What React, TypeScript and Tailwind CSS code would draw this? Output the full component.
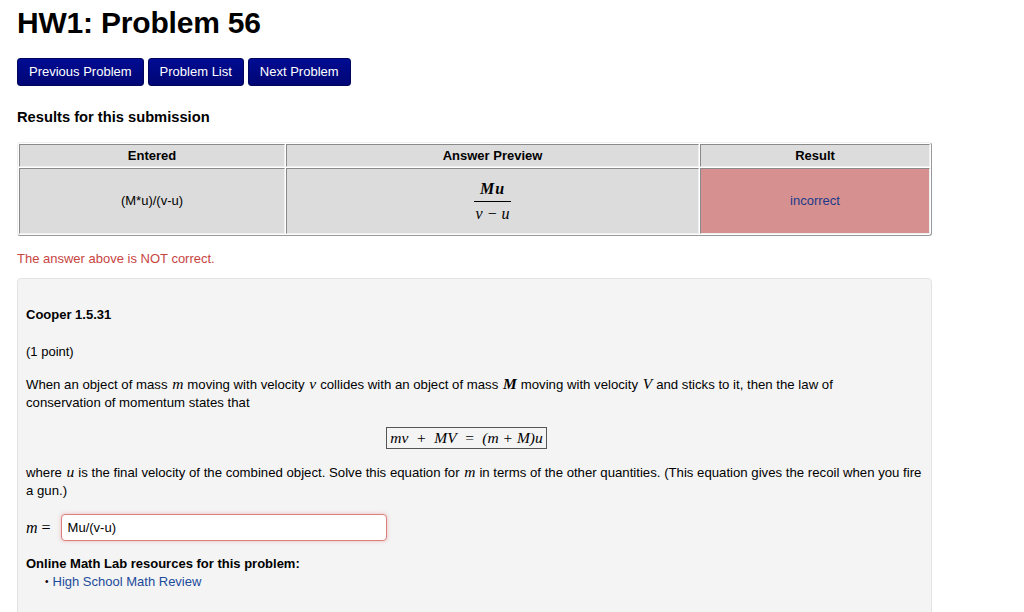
const sans = "font-['Liberation_Sans',Arial,Helvetica,sans-serif]";
const serif = "font-['Liberation_Serif','Times_New_Roman',serif] italic";

function Var({ children }: { children: React.ReactNode }) {
  return <span className={`${serif} ml-[1px] mr-[4px] text-[15.5px]`}>{children}</span>;
}

const navButtons = ["Previous Problem", "Problem List", "Next Problem"];

export default function App() {
  return (
    <div className={`${sans} bg-white text-black min-h-[612px] w-[1024px] overflow-hidden px-[17px] text-[13px]`}>
      {/* Title */}
      <h1 className="pt-[5px] text-[30px] font-bold leading-[36px] tracking-[-0.2px]">HW1: Problem 56</h1>

      {/* Nav buttons */}
      <div className="mt-[17px] flex gap-[4px]">
        {navButtons.map((b) => (
          <button
            key={b}
            className="h-[28px] rounded-[3px] border border-[#00065e] bg-gradient-to-b from-[#000c92] to-[#000674] px-[11px] text-[13px] text-white"
          >
            {b}
          </button>
        ))}
      </div>

      {/* Results */}
      <h2 className="mt-[22px] text-[14.7px] font-bold leading-[18px]">Results for this submission</h2>

      <table className="mt-[16px] w-[915px] border-separate border-spacing-[1px] rounded-[3px] border border-t-[#eeeeee] border-l-[#eeeeee] border-b-[#999999] border-r-[#999999] text-[13px]">
        <thead>
          <tr>
            <th className="h-[23px] w-[266px] border border-t-[#8a8a8a] border-l-[#8a8a8a] border-b-[#f0f0f0] border-r-[#f0f0f0] bg-[#dcdcdc] font-bold">Entered</th>
            <th className="h-[23px] w-[413px] border border-t-[#8a8a8a] border-l-[#8a8a8a] border-b-[#f0f0f0] border-r-[#f0f0f0] bg-[#dcdcdc] font-bold">Answer Preview</th>
            <th className="h-[23px] border border-t-[#8a8a8a] border-l-[#8a8a8a] border-b-[#f0f0f0] border-r-[#f0f0f0] bg-[#dcdcdc] font-bold">Result</th>
          </tr>
        </thead>
        <tbody>
          <tr>
            <td className="h-[66px] border border-t-[#8a8a8a] border-l-[#8a8a8a] border-b-[#f0f0f0] border-r-[#f0f0f0] bg-[#dcdcdc] text-center">(M*u)/(v-u)</td>
            <td className="h-[66px] border border-t-[#8a8a8a] border-l-[#8a8a8a] border-b-[#f0f0f0] border-r-[#f0f0f0] bg-[#dcdcdc] text-center">
              <div className={`${serif} mx-auto inline-flex flex-col items-center text-[16px] leading-[18px]`}>
                <span className="px-[2px] pb-[3px] font-bold tracking-[1px]">Mu</span>
                <span className="w-full border-t border-black px-[2px] pt-[3px]">v − u</span>
              </div>
            </td>
            <td className="h-[66px] border border-t-[#8a8a8a] border-l-[#8a8a8a] border-b-[#f0f0f0] border-r-[#f0f0f0] bg-[#d69090] text-center text-[#1c3a8a]">incorrect</td>
          </tr>
        </tbody>
      </table>

      <p className="mt-[14px] leading-[18px] text-[#c8453f]">The answer above is NOT correct.</p>

      {/* Problem panel */}
      <div className="mt-[10px] w-[915px] rounded-[4px] border border-[#e3e3e3] bg-[#f4f4f4] pl-[8px] pr-[8px] pt-[27px] pb-[30px] leading-[18px]">
        <p className="font-bold">Cooper 1.5.31</p>
        <p className="mt-[19px]">(1 point)</p>
        <p className="mt-[14px] whitespace-nowrap text-[13.2px]">
          When an object of mass <Var>m</Var>moving with velocity <Var>v</Var>collides with an object of mass <Var><b>M</b></Var>moving with velocity <Var>V</Var>and sticks to it, then the law of
          <br />
          conservation of momentum states that
        </p>
        <div className="mt-[15px] flex justify-center pr-[16px]">
          <div className={`${serif} h-[22px] border border-[#555] px-[3px] text-[15.5px] leading-[20px] whitespace-pre`}>
            {"mv  +  MV  =  (m + M)u"}
          </div>
        </div>
        <p className="mt-[14px] whitespace-nowrap text-[13.2px]">
          where <Var>u</Var>is the final velocity of the combined object. Solve this equation for <Var>m</Var>in terms of the other quantities. (This equation gives the recoil when you fire
          <br />
          a gun.)
        </p>
        <div className="mt-[14px] flex items-center gap-[10px]">
          <span className={`${serif} text-[16px]`}>
            m <span className="not-italic">=</span>
          </span>
          <div className="flex h-[27px] w-[326px] items-center rounded-[4px] border border-[#d9807e] bg-white px-[6px] text-[13px] shadow-[0_0_4px_rgba(220,80,80,0.35)]">
            Mu/(v-u)
          </div>
        </div>
        <p className="mt-[14px] font-bold">Online Math Lab resources for this problem:</p>
        <ul className="pl-[19px]">
          <li className="flex items-center gap-[4px]">
            <span className="text-[10px]">•</span>
            <a className="text-[#1b4b9b]">High School Math Review</a>
          </li>
        </ul>
      </div>
    </div>
  );
}
